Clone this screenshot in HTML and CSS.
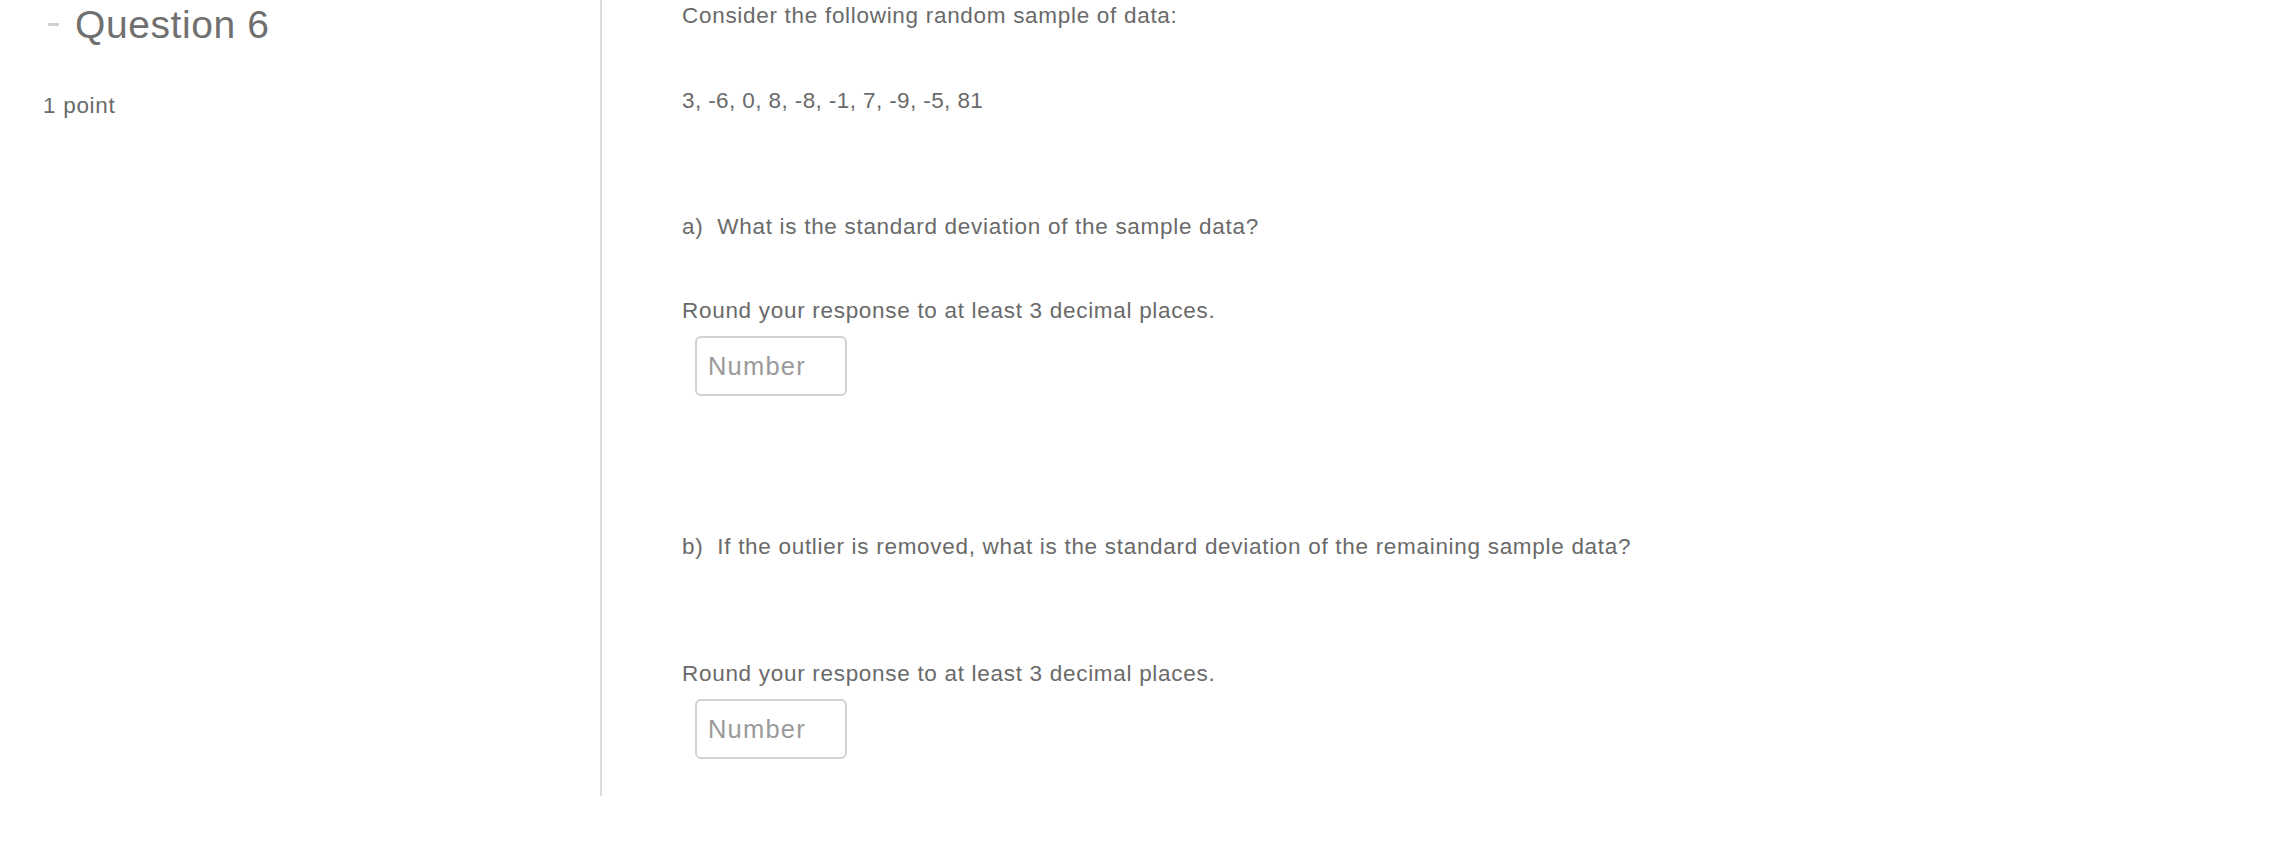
FILE: index.html
```html
<!DOCTYPE html>
<html lang="en">
<head>
<meta charset="utf-8">
<title>Question 6</title>
<link rel="stylesheet" href="styles.css">
</head>
<body>
<div class="question">
  <aside class="q-meta">
    <h2 class="q-title"><span class="q-toggle"></span><span class="q-name">Question 6</span></h2>
    <div class="q-points">1 point</div>
  </aside>
  <main class="q-body">
    <p class="txt intro">Consider the following random sample of data:</p>
    <p class="txt data">3, -6, 0, 8, -8, -1, 7, -9, -5, 81</p>
    <p class="txt part-a">a)&nbsp; What is the standard deviation of the sample data?</p>
    <p class="txt round">Round your response to at least 3 decimal places.</p>
    <input class="answer" type="text" placeholder="Number">
    <p class="txt part-b">b)&nbsp; If the outlier is removed, what is the standard deviation of the remaining sample data?</p>
    <p class="txt round round-b">Round your response to at least 3 decimal places.</p>
    <input class="answer" type="text" placeholder="Number">
  </main>
</div>
</body>
</html>
```
FILE: styles.css
```css
html, body {
  margin: 0;
  padding: 0;
  background: #ffffff;
}
body {
  font-family: "Liberation Sans", Arial, Helvetica, sans-serif;
  color: #6a6a6a;
}
.question {
  display: flex;
  align-items: flex-start;
}
.q-meta {
  width: 600px;
  height: 796px;
  border-right: 2px solid #dcdcdc;
  flex: none;
}
.q-title {
  display: flex;
  align-items: center;
  margin: 0;
  padding-top: 3px;
  height: 44px;
  font-weight: normal;
  font-size: 39px;
  line-height: 44px;
  letter-spacing: 0.6px;
  color: #707070;
}
.q-toggle {
  display: block;
  width: 11px;
  height: 3px;
  margin-left: 48px;
  margin-right: 16px;
  margin-top: -1px;
  background: #cfcfcf;
  border-radius: 1px;
}
.q-points {
  margin-top: 43px;
  padding-left: 43px;
  font-size: 22.5px;
  line-height: 32px;
  letter-spacing: 0.7px;
}
.q-body {
  flex: 1;
  padding-left: 80px;
  display: flex;
  flex-direction: column;
  align-items: flex-start;
}
.txt {
  margin: 0;
  font-size: 22.5px;
  line-height: 32px;
  letter-spacing: 0.7px;
  white-space: nowrap;
}
.data { margin-top: 53px; letter-spacing: 0.4px; }
.part-a { margin-top: 94px; }
.round { margin-top: 52px; }
.part-b { margin-top: 135px; }
.round-b { margin-top: 95px; }
.answer {
  box-sizing: border-box;
  margin: 9px 0 0 13px;
  width: 152px;
  height: 60px;
  padding: 0 10px 0 11px;
  border: 2px solid #d2d2d2;
  border-radius: 6px;
  background: #ffffff;
  font-family: "Liberation Sans", Arial, Helvetica, sans-serif;
  font-size: 25.5px;
  letter-spacing: 1.2px;
  color: #555555;
  outline: none;
}
.answer::placeholder {
  color: #9a9a9a;
  opacity: 1;
}
```
